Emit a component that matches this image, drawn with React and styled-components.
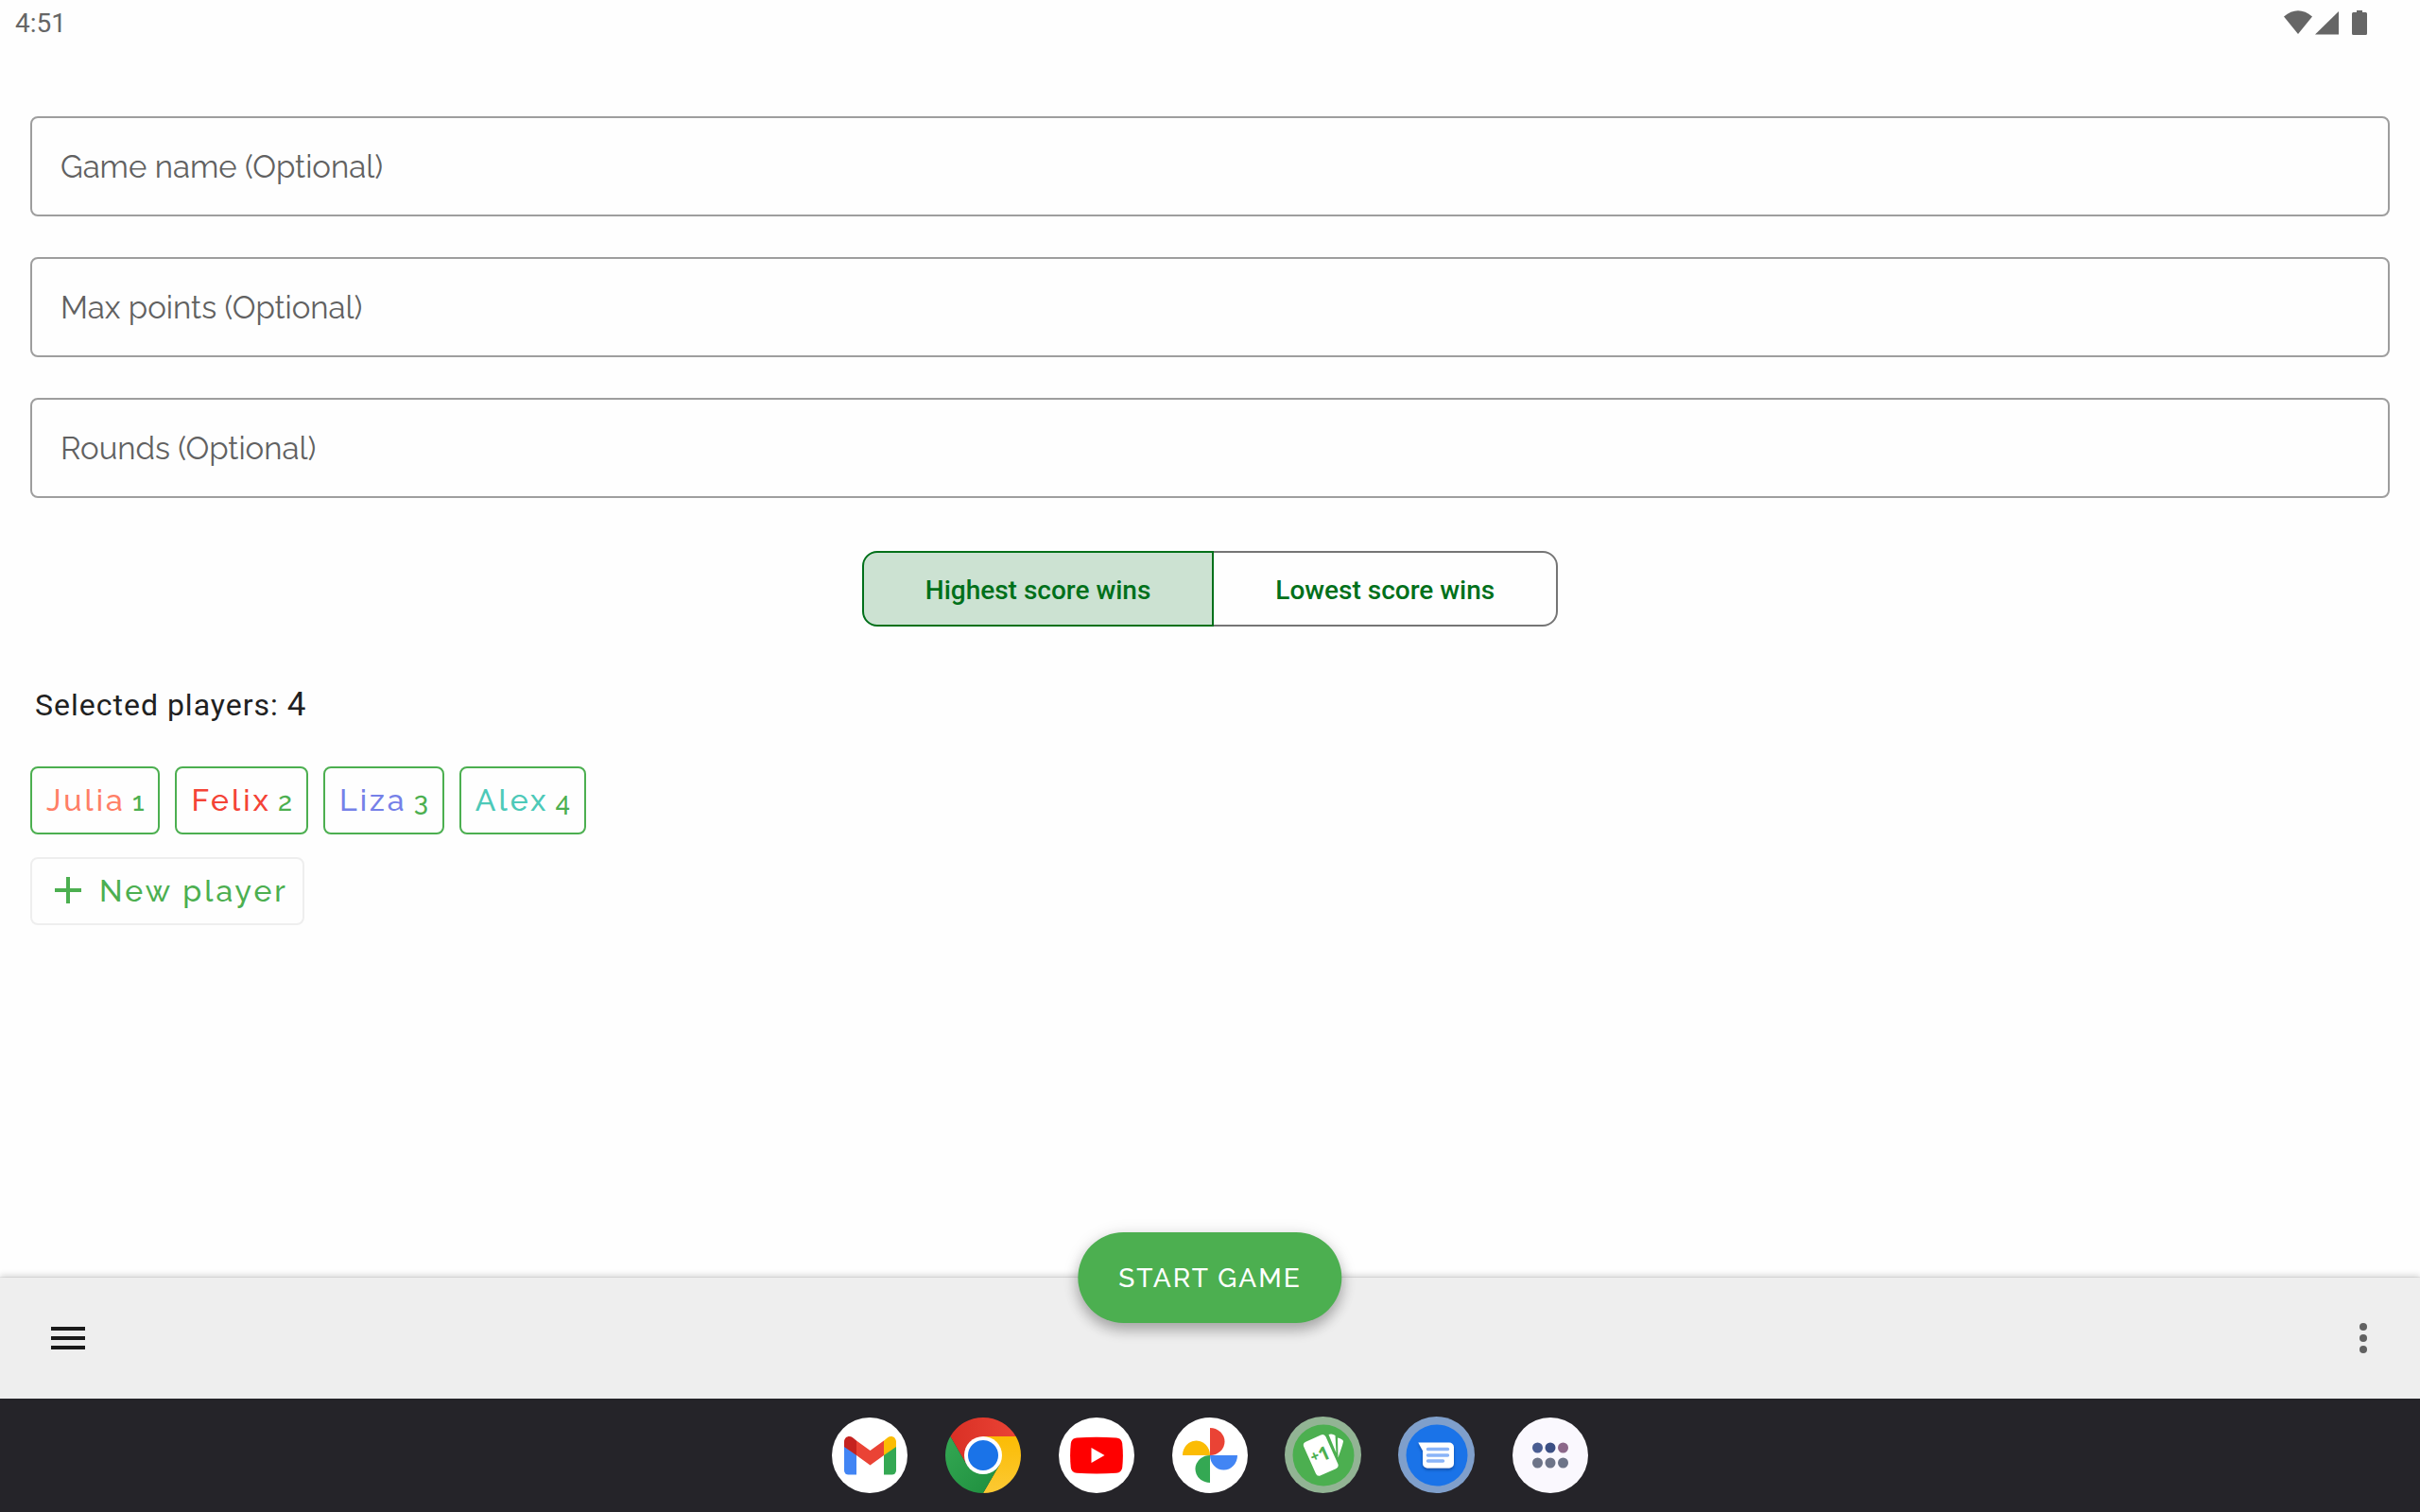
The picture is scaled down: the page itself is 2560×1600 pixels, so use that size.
import React, {useState} from 'react';
import styled, {createGlobalStyle} from 'styled-components';

const GlobalStyle = createGlobalStyle`
  * {
    box-sizing: border-box;
  }
  body {
    margin: 0;
    background-color: #fefefe;
    font-family: Raleway, Lato, sans-serif;
    font-weight: 500;
    color: #1c1b1f;
  }
  button, input {
    font-family: inherit;
    font-weight: inherit;
  }
  button {
    cursor: pointer;
  }
`;

const Page = styled.div`
  min-height: 100vh;
  display: flex;
  flex-direction: column;
`;
const StatusBar = styled.header`
  height: 48px;
  padding: 0 56px 0 16px;
  display: flex;
  align-items: flex-start;
  justify-content: space-between;
  color: #666666;
  font-family: Roboto, sans-serif;
  font-size: 28px;
  font-weight: 400;
  line-height: 50px;
`;
const StatusIcons = styled.svg`
  width: 88px;
  height: 48px;
  fill: currentColor;
`;
const Content = styled.main`
  flex: 1;
  padding: 75px 32px 32px;
  display: flex;
  flex-direction: column;
`;
const Fields = styled.form`
  display: flex;
  flex-direction: column;
  gap: 43px;
`;
const Field = styled.input`
  width: 100%;
  height: 106px;
  padding: 0 30px;
  border: 2px solid #9e9e9e;
  border-radius: 8px;
  background: transparent;
  color: #1c1b1f;
  font-size: 33px;
  font-weight: 400;
  &::placeholder {
    color: #616161;
    opacity: 1;
  }
`;
const ToggleGroup = styled.div`
  display: flex;
  align-self: center;
  margin-top: 56px;
`;
const Toggle = styled.button`
  position: relative;
  z-index: ${props => (props.$active ? 1 : 0)};
  height: 80px;
  padding: 2px 65px 0;
  border: 2px solid ${props => (props.$active ? '#00701a' : '#757575')};
  background-color: ${props => (props.$active ? '#cce2d2' : 'transparent')};
  color: #00701a;
  font-family: Roboto, sans-serif;
  font-size: 28px;
  &:first-child {
    border-radius: 16px 0 0 16px;
  }
  &:last-child {
    border-radius: 0 16px 16px 0;
    margin-left: -2px;
  }
`;
const PlayersTitle = styled.h2`
  margin: 61px 5px 0;
  font-family: Roboto, sans-serif;
  font-size: 32px;
  font-weight: 400;
  line-height: 44px;
  letter-spacing: 1px;
  color: #212121;
  span {
    font-size: 35px;
  }
`;
const Chips = styled.div`
  display: flex;
  flex-wrap: wrap;
  gap: 16px;
  margin-top: 43px;
`;
const Chip = styled.button`
  height: 72px;
  padding: 0 15px 2px;
  border: 2px solid #4caf50;
  border-radius: 8px;
  background: transparent;
  color: ${props => props.$color};
  font-size: 32px;
  letter-spacing: 3px;
  small {
    color: #4caf50;
    font-size: 28px;
    letter-spacing: 0;
  }
`;
const NewPlayer = styled.button`
  align-self: flex-start;
  display: flex;
  align-items: center;
  gap: 19px;
  height: 72px;
  margin-top: 24px;
  padding: 0 15px 2px 24px;
  border: 2px solid #eeeeee;
  border-radius: 8px;
  background: transparent;
  color: #4caf50;
  font-size: 32px;
  letter-spacing: 3px;
  svg {
    width: 28px;
    height: 28px;
    fill: currentColor;
  }
`;
const BottomBar = styled.nav`
  position: relative;
  height: 128px;
  padding: 0 32px;
  display: flex;
  align-items: center;
  justify-content: space-between;
  background-color: #eeeeee;
  box-shadow: 0 -1px 0 rgba(0, 0, 0, 0.06), 0 -3px 6px rgba(0, 0, 0, 0.14);
`;
const IconButton = styled.button`
  width: ${props => props.$width}px;
  height: 80px;
  padding: 0;
  border: none;
  background: none;
  color: ${props => props.$color};
  svg {
    display: block;
    width: 100%;
    height: 100%;
    fill: currentColor;
  }
`;
const StartButton = styled.button`
  position: absolute;
  left: 50%;
  top: -48px;
  transform: translateX(-50%);
  height: 96px;
  padding: 0 43px;
  border: none;
  border-radius: 48px;
  background-color: #4caf50;
  box-shadow: 0 8px 14px rgba(0, 0, 0, 0.24), 0 2px 18px rgba(0, 0, 0, 0.12);
  color: #ffffff;
  font-size: 28px;
  letter-spacing: 2px;
  white-space: nowrap;
`;
const Taskbar = styled.footer`
  height: 120px;
  display: flex;
  align-items: center;
  justify-content: center;
  gap: 40px;
  background-color: #252429;
`;
const AppButton = styled.button`
  width: 80px;
  height: 80px;
  padding: 0;
  border: none;
  background: none;
  svg {
    display: block;
    overflow: visible;
  }
`;

const fields = ['Game name (Optional)', 'Max points (Optional)', 'Rounds (Optional)'];
const goals = ['Highest score wins', 'Lowest score wins'];
const players = [
  {name: 'Julia', color: '#ff7f66'},
  {name: 'Felix', color: '#f44336'},
  {name: 'Liza', color: '#7580e8'},
  {name: 'Alex', color: '#4dc9b8'},
];

const Gmail = () => (
  <svg width="80" height="80" viewBox="0 0 80 80">
    <circle cx="40" cy="40" r="40" fill="#fff" />
    <path d="M13 30l13 9v21.500H17.500a4.500 4.500 0 0 1-4.500-4.500z" fill="#4285f4" />
    <path d="M55 39l13-9v26a4.500 4.500 0 0 1-4.500 4.500H55z" fill="#34a853" />
    <path d="M55 24.500l4-3.200c3.500-2.800 9-1 9 4.700v5L55 40z" fill="#fbbc04" />
    <path d="M26 24.500l14.500 10.500L55 24.500V40L40.500 50.500 26 40z" fill="#ea4335" />
    <path d="M13 26c0-5.700 5.500-7.500 9-4.700l4 3.200V40l-13-9z" fill="#c5221f" />
  </svg>
);

const Chrome = () => (
  <svg width="80" height="80" viewBox="0 0 80 80">
    <defs>
      <linearGradient id="chromeRed"><stop stopColor="#d93025" /><stop offset="1" stopColor="#ea4335" /></linearGradient>
      <linearGradient id="chromeYellow" x1="0" y1="1" x2="0" y2="0"><stop stopColor="#fcc934" /><stop offset="1" stopColor="#fbbc04" /></linearGradient>
      <linearGradient id="chromeGreen" x1="1" y1="1" x2="0" y2="0"><stop stopColor="#1e8e3e" /><stop offset="1" stopColor="#34a853" /></linearGradient>
    </defs>
    <path d="M5.360 20a40 40 0 0 1 69.280 0H40L22.680 50z" fill="url(#chromeRed)" />
    <path d="M74.640 20A40 40 0 0 1 40 80L57.320 50 40 20z" fill="url(#chromeYellow)" />
    <path d="M40 80A40 40 0 0 1 5.360 20L22.680 50H57.320z" fill="url(#chromeGreen)" />
    <circle cx="40" cy="40" r="20" fill="#fff" />
    <circle cx="40" cy="40" r="16" fill="#1a73e8" />
  </svg>
);

const YouTube = () => (
  <svg width="80" height="80" viewBox="0 0 80 80">
    <circle cx="40" cy="40" r="40" fill="#fff" />
    <path d="M19 21.600Q40 20 61 21.600 66.500 22.200 67.200 27.500 68.600 40 67.200 53 66.500 58.200 61 58.800 40 60.300 19 58.800 13.500 58.200 12.800 53 11.400 40 12.800 27.500 13.500 22.200 19 21.600z" fill="#f00" />
    <path d="M34.500 32L48.500 40l-14 8z" fill="#fff" />
  </svg>
);

const Photos = () => (
  <svg width="80" height="80" viewBox="0 0 80 80">
    <circle cx="40" cy="40" r="40" fill="#fff" />
    <path d="M40 11a15.500 14.500 0 0 1 0 29z" fill="#ea4335" />
    <path d="M69 40a14.500 15.500 0 0 1-29 0z" fill="#4285f4" />
    <path d="M40 69a15.500 14.500 0 0 1 0-29z" fill="#34a853" />
    <path d="M11 40a14.500 15.500 0 0 1 29 0z" fill="#fbbc04" />
  </svg>
);

const ScoreCards = () => (
  <svg width="80" height="80" viewBox="0 0 80 80">
    <circle cx="39.500" cy="39.500" r="40.500" fill="#92b494" />
    <circle cx="40" cy="40" r="32.500" fill="#4caf50" />
    <path d="M45.500 18q3.500-1.500 7 1L53.500 37.500zM55 21.500q5 1 6 3.500 0 2-5.500 17.500z" fill="#fff" />
    <g transform="rotate(-24 37 40)" fontFamily="Noto Sans, sans-serif" fontWeight="700" textAnchor="middle">
      <rect x="24.500" y="20.500" width="25.500" height="39" rx="4" fill="#fff" />
      <text x="31" y="44" fontSize="16" fill="#4caf50">+</text>
      <text x="41" y="47" fontSize="20" fill="#4caf50">1</text>
    </g>
  </svg>
);

const Messages = () => (
  <svg width="80" height="80" viewBox="0 0 80 80">
    <defs>
      <filter id="bubbleShadow" x="-30%" y="-30%" width="160%" height="160%">
        <feDropShadow dx="0" dy="2" stdDeviation="1.500" floodColor="#0b3f8f" floodOpacity="0.7" />
      </filter>
    </defs>
    <circle cx="39.500" cy="39.500" r="40.500" fill="#7f9fcb" />
    <circle cx="40" cy="40" r="32.500" fill="#1a73e8" />
    <path d="M20.300 26.500H53a5 5 0 0 1 5 5v17a5 5 0 0 1-5 5H30a5 5 0 0 1-5-5V35z" fill="#fff" filter="url(#bubbleShadow)" />
    <path d="M30.500 33.500h21M30.500 40h21M30.500 46h16" stroke="#8ab4f8" strokeWidth="3.500" strokeLinecap="round" />
  </svg>
);

const AllApps = () => (
  <svg width="80" height="80" viewBox="0 0 80 80">
    <circle cx="40" cy="40" r="40" fill="#faf8fe" />
    <circle cx="26.500" cy="32" r="5.500" fill="#4a5d92" />
    <circle cx="40" cy="32" r="5.500" fill="#3b4f84" />
    <circle cx="53.500" cy="32" r="5.500" fill="#8c688a" />
    <circle cx="26.500" cy="48" r="5.500" fill="#6d7488" />
    <circle cx="40" cy="48" r="5.500" fill="#6d7488" />
    <circle cx="53.500" cy="48" r="5.500" fill="#6d7488" />
  </svg>
);

const apps = [
  {name: 'Gmail', Icon: Gmail},
  {name: 'Chrome', Icon: Chrome},
  {name: 'YouTube', Icon: YouTube},
  {name: 'Photos', Icon: Photos},
  {name: 'Score cards', Icon: ScoreCards},
  {name: 'Messages', Icon: Messages},
  {name: 'All apps', Icon: AllApps},
];

export default function App() {
  const [goal, setGoal] = useState(goals[0]);

  return (
    <Page>
      <GlobalStyle />
      <StatusBar>
        <time>4:51</time>
        <StatusIcons viewBox="0 0 88 48" aria-hidden="true">
          <path d="M0 17.500Q15 5 30 17.500L15 36z" />
          <path d="M58 12v24.500H33z" />
          <path d="M77 11h6v2h3.500q1.500 0 1.500 1.500v21q0 1.500-1.500 1.500h-13q-1.500 0-1.500-1.500v-21q0-1.500 1.500-1.500H77z" />
        </StatusIcons>
      </StatusBar>
      <Content>
        <Fields>
          {fields.map(field => (
            <Field key={field} type="text" placeholder={field} aria-label={field} />
          ))}
        </Fields>
        <ToggleGroup role="group" aria-label="Winning score">
          {goals.map(item => (
            <Toggle key={item} type="button" $active={item === goal} aria-pressed={item === goal} onClick={() => setGoal(item)}>
              {item}
            </Toggle>
          ))}
        </ToggleGroup>
        <PlayersTitle>Selected players: <span>{players.length}</span></PlayersTitle>
        <Chips>
          {players.map((player, index) => (
            <Chip key={player.name} type="button" $color={player.color}>
              {player.name}<small> {index + 1}</small>
            </Chip>
          ))}
        </Chips>
        <NewPlayer type="button">
          <svg viewBox="0 0 28 28" aria-hidden="true"><path d="M12 0h4v12h12v4H16v12h-4V16H0v-4h12z" /></svg>
          New player
        </NewPlayer>
      </Content>
      <BottomBar>
        <IconButton type="button" aria-label="Menu" $width={80} $color="#1a1a1a">
          <svg viewBox="0 0 80 80"><path d="M22 28h36v4H22zM22 38h36v4H22zM22 48h36v4H22z" /></svg>
        </IconButton>
        <StartButton type="button">START GAME</StartButton>
        <IconButton type="button" aria-label="More options" $width={56} $color="#616161">
          <svg viewBox="0 0 56 80">
            <circle cx="28" cy="28" r="4" />
            <circle cx="28" cy="40" r="4" />
            <circle cx="28" cy="52" r="4" />
          </svg>
        </IconButton>
      </BottomBar>
      <Taskbar>
        {apps.map(({name, Icon}) => (
          <AppButton key={name} type="button" aria-label={name}><Icon /></AppButton>
        ))}
      </Taskbar>
    </Page>
  )
}
